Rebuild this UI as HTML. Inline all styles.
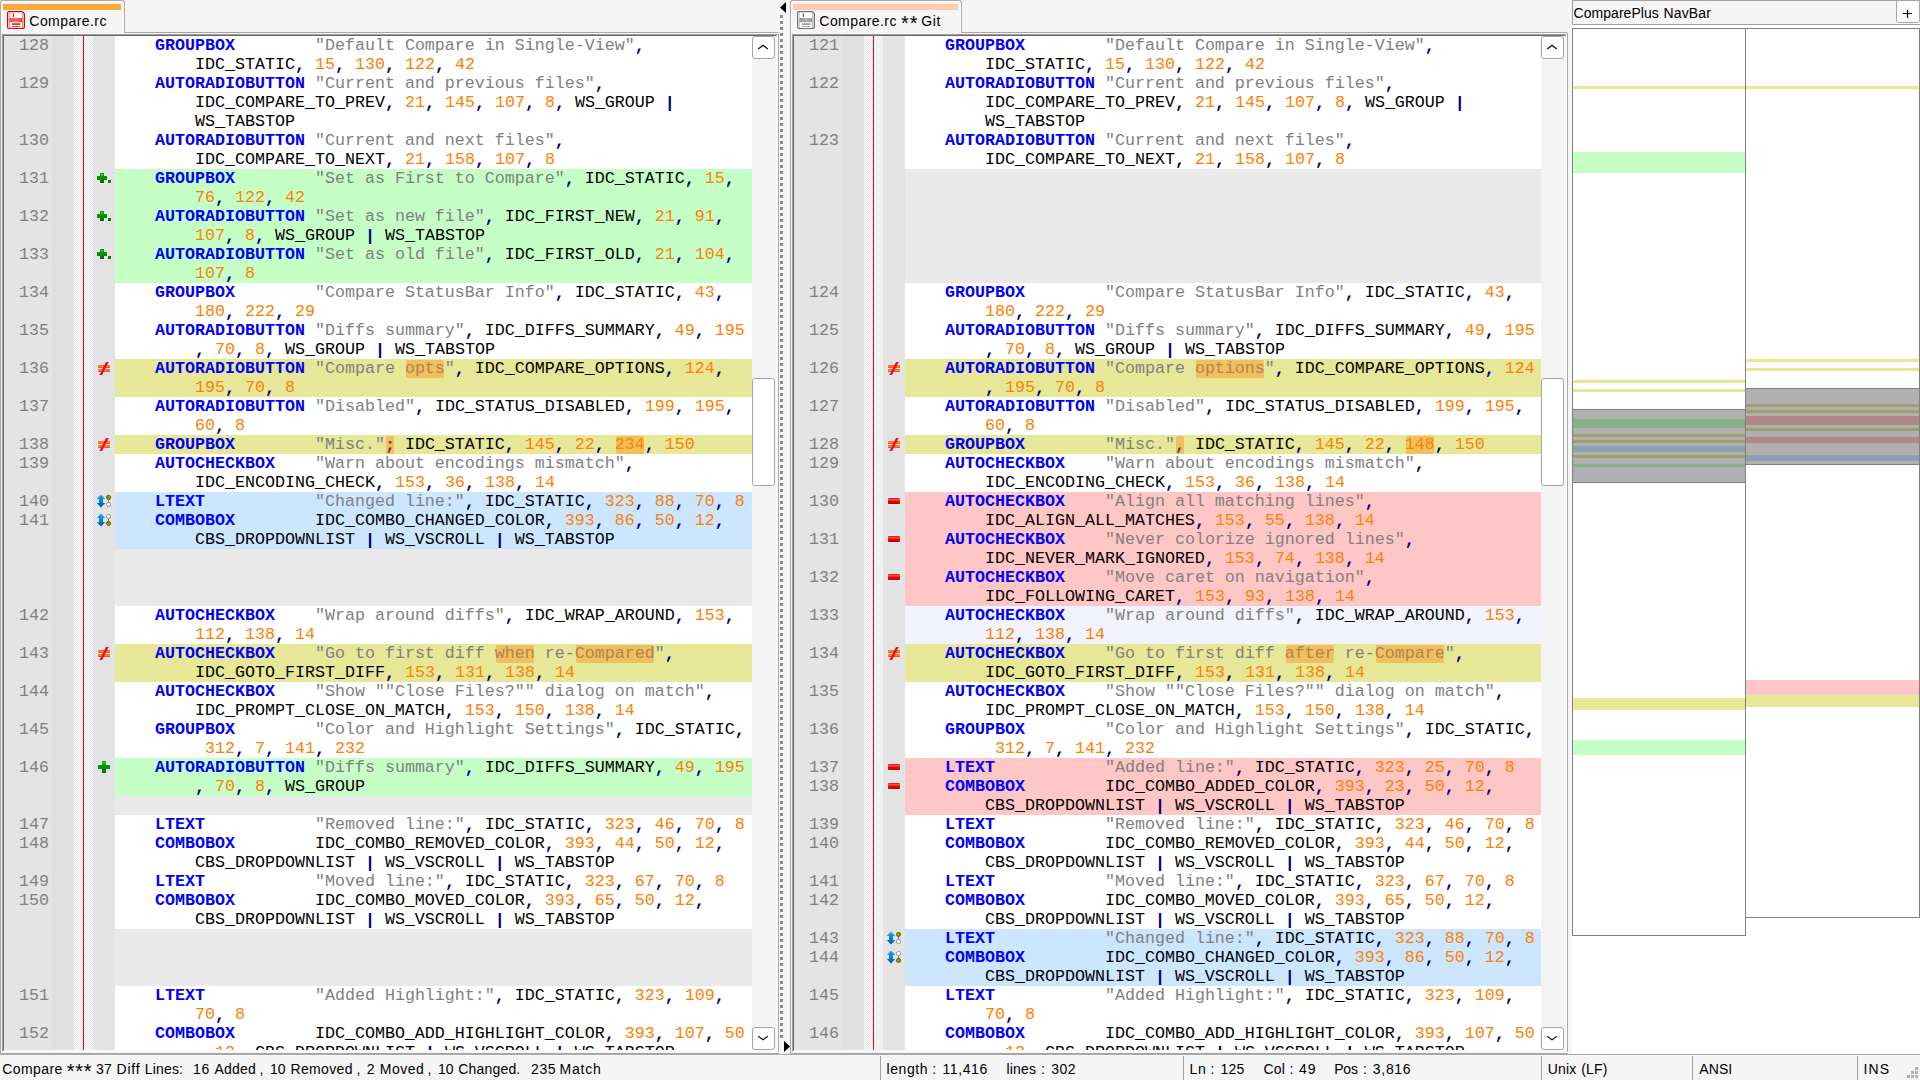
<!DOCTYPE html>
<html lang="en"><head><meta charset="utf-8"><title>Notepad++ ComparePlus</title>
<style>
*{margin:0;padding:0;box-sizing:border-box}
html,body{width:1920px;height:1080px;overflow:hidden;background:#f5f5f5}
body{position:relative;font-family:"Liberation Sans",sans-serif;font-size:14.5px;color:#000}
.abs{position:absolute}
/* tab control frames */
.tc{position:absolute;top:0;height:1054px}
.tc .ln-l{position:absolute;left:0;top:1px;width:1px;height:1052px;background:#a8a8a8}
.tc .ln-r{position:absolute;right:0;top:33px;width:1px;height:1019px;background:#a8a8a8}
.tc .ln-b{position:absolute;left:0;right:0;bottom:0;height:1px;background:#a8a8a8}
.tc .ln-t{position:absolute;left:124px;right:1px;top:32px;height:1px;background:#a8a8a8}
.tab{position:absolute;left:0;top:0;height:33px;border:1px solid #a8a8a8;border-bottom:none;border-radius:3px 3px 0 0;background:#f5f5f5;box-shadow:inset 1px 1px 0 #fff,inset -1px 0 0 #fff}
.tab .bar{position:absolute;left:2px;right:3px;top:3px;height:6px}
.tab .ttl{position:absolute;left:29px;top:9px;line-height:20px;white-space:pre}
.tab svg{position:absolute;left:6px;top:10px}
/* editor */
.ed{position:absolute;top:34px;height:1018px;border-top:1px solid #a0a0a0;border-left:1px solid #a0a0a0;border-right:1px solid #fff;border-bottom:1px solid #fff;background:#fff}
.ed .in{position:absolute;left:0;top:0;right:0;bottom:0;border-top:1px solid #696969;border-left:1px solid #696969;border-right:1px solid #f6f6f6;border-bottom:1px solid #f6f6f6;overflow:hidden}
.ed .vp{position:absolute;left:0;top:0;width:748px;height:1014px;overflow:hidden;background:#fff}
.m1{position:absolute;left:0;top:0;width:48px;height:100%;background:#e4e4e4}
.m2{position:absolute;left:48px;top:0;width:22px;height:100%;background:#e0e0e0}
.m3{position:absolute;left:70px;top:0;width:19px;height:100%;background:#e6e6e6 repeating-conic-gradient(#fbfbfb 0 25%,#e6e6e6 0 50%) 0 0/2px 2px}
.m3 i{position:absolute;left:9px;top:0;width:1.4px;height:100%;background:#ff0000}
.m4{position:absolute;left:89px;top:0;width:22px;height:100%;background:#e3e3e3}
.row{position:absolute;left:111px;width:637px;height:19px;font-family:"Liberation Mono",monospace;font-size:16.675px;line-height:19px;white-space:pre}
.row .t{position:absolute;left:0;top:0;height:19px;white-space:pre;color:#000}
.row .ln{position:absolute;left:-111px;top:0;width:45px;text-align:right;color:#808080}
.row .mk{position:absolute;left:-22px;top:0}
.row u{position:absolute;top:1.3px;height:17.5px;margin-left:.55px;background:rgba(255,131,6,.39);border-radius:1.5px;text-decoration:none}
.row b.k{color:#0000ff;font-weight:bold}
.row b.o{color:#000080;font-weight:bold;position:relative;top:.8px}
.row i{font-style:normal}
.row i.s{color:#808080}
.row i.n{color:#ff8000}
.row.g{background:#c6ffc6}
.row.r{background:#ffc6c6}
.row.y{background:#e7e798}
.row.b{background:#cce6ff}
.row.x{background:#e9e9e9}
.row.c{background:#f3f3fd}
/* scrollbars */
.sb{position:absolute;right:0;top:0;width:24px;height:1014px;background:#f3f3f3}
.sb .btn{position:absolute;left:0;width:23px;height:23px;border:1px solid #a6a6a6;border-radius:3px;background:#fff}
.sb .th{position:absolute;left:0;top:342px;width:23px;height:108px;border:1px solid #a6a6a6;border-radius:3px;background:#fff}
.sb svg{position:absolute;left:0;top:0}
/* status bar */
.st{position:absolute;left:0;top:1054px;width:1920px;height:26px;background:linear-gradient(#a6a6a6,#a6a6a6) 0 0/100% 1px no-repeat,linear-gradient(#fafafa,#fafafa) 0 1px/100% 1px no-repeat,#f5f5f5}
.st .s{position:absolute;top:2px;width:1px;height:24px;background:#a0a0a0}
/* navbar */
.cap{position:absolute;left:1572px;top:0;width:348px;height:25px;border:1px solid #a0a0a0;border-right:none;background:#f5f5f5}
.cap span{position:absolute;left:1px;top:2px;line-height:20px;white-space:pre}
.cap .plus{position:absolute;right:0;top:-1px;width:24px;height:23px;border:1px solid #a6a6a6;border-radius:3px;background:#fff}
.nav{position:absolute;left:1572px;top:25px;width:348px;height:1029px;background:#fff}
.ncol{position:absolute;top:3px;border:1px solid #808080;background:#fff}
.nb{position:absolute;width:173px}
.nb.y{background:#e7e798}.nb.g{background:#c6ffc6}.nb.r{background:#ffc6c6}.nb.b{background:#cce6ff}
.nvp{position:absolute;border:1px solid #808080;background:rgba(0,0,0,.31)}
.uw{position:absolute;font-size:14px;line-height:16px;white-space:pre;color:#000}

</style></head><body>
<svg width="0" height="0" style="position:absolute"><defs>
<linearGradient id="gg" x1="0" y1="0" x2="0" y2="1"><stop offset="0" stop-color="#0aa80a"/><stop offset=".5" stop-color="#009400"/><stop offset="1" stop-color="#006c00"/></linearGradient>
<linearGradient id="gr" x1="0" y1="0" x2="0" y2="1"><stop offset="0" stop-color="#f40000"/><stop offset=".3" stop-color="#ff5a5a"/><stop offset=".55" stop-color="#e00000"/><stop offset=".8" stop-color="#f00000"/><stop offset="1" stop-color="#900000"/></linearGradient>
<linearGradient id="go" x1="0" y1="0" x2="0" y2="1"><stop offset="0" stop-color="#e86000"/><stop offset=".5" stop-color="#ff8a30"/><stop offset="1" stop-color="#c85000"/></linearGradient>
<linearGradient id="gb" x1="0" y1="0" x2="0" y2="1"><stop offset="0" stop-color="#18a4ff"/><stop offset=".5" stop-color="#0088e0"/><stop offset="1" stop-color="#0058a0"/></linearGradient>
<linearGradient id="sr" x1="0" y1="0" x2="1" y2="0"><stop offset="0" stop-color="#ff4040"/><stop offset=".5" stop-color="#ff6868"/><stop offset="1" stop-color="#f03030"/></linearGradient>
<linearGradient id="sg" x1="0" y1="0" x2="1" y2="0"><stop offset="0" stop-color="#909090"/><stop offset=".5" stop-color="#b0b0b0"/><stop offset="1" stop-color="#8a8a8a"/></linearGradient>
</defs></svg>

<!-- left pane -->
<div class="tc" style="left:0;width:779px">
 <div class="ln-l"></div><div class="ln-r"></div><div class="ln-b"></div><div class="ln-t"></div>
 <div class="tab" style="width:125px"><div class="bar" style="background:#faaa3c"></div>
  <svg width="18" height="18" viewBox="0 0 18 18"><path d="M.5 1.5 Q.5 .5 1.5 .5 H15.5 L17.5 2.5 V16.5 Q17.5 17.5 16.5 17.5 H1.5 Q.5 17.5 .5 16.5 Z" fill="url(#sr)" stroke="#e00000" stroke-width="1"/>
 <rect x="1.1" y="1.6" width="1.2" height="15" fill="#ffd8d8"/><rect x="15.6" y="2.6" width="1.2" height="14" fill="#ffd8d8"/>
 <rect x="2.6" y="1.4" width="12.6" height="5.6" fill="#fff"/>
 <rect x="5.8" y="2.2" width="1.2" height="3.8" fill="#e02020"/>
 <rect x="2.8" y="11.2" width="12.2" height="5.8" fill="#fff"/>
 <rect x="4.8" y="12.2" width="8.6" height="1.8" fill="#e03030"/>
 <rect x="4.8" y="15" width="8.6" height="1" fill="#e84040"/></svg>
  </div>
 <div class="ed" style="left:2px;width:776px"><div class="in">
  <div class="vp">
   <div class="m1"></div><div class="m2"></div><div class="m3"><i></i></div><div class="m4"></div>
<div class="row w" style="top:0px"><span class="ln">128</span><div class="t">    <b class="k">GROUPBOX</b>        <i class="s">"Default Compare in Single-View"</i><b class="o">,</b></div></div>
<div class="row w" style="top:19px"><div class="t">        IDC_STATIC<b class="o">,</b> <i class="n">15</i><b class="o">,</b> <i class="n">130</i><b class="o">,</b> <i class="n">122</i><b class="o">,</b> <i class="n">42</i></div></div>
<div class="row w" style="top:38px"><span class="ln">129</span><div class="t">    <b class="k">AUTORADIOBUTTON</b> <i class="s">"Current and previous files"</i><b class="o">,</b></div></div>
<div class="row w" style="top:57px"><div class="t">        IDC_COMPARE_TO_PREV<b class="o">,</b> <i class="n">21</i><b class="o">,</b> <i class="n">145</i><b class="o">,</b> <i class="n">107</i><b class="o">,</b> <i class="n">8</i><b class="o">,</b> WS_GROUP <b class="o">|</b></div></div>
<div class="row w" style="top:76px"><div class="t">        WS_TABSTOP</div></div>
<div class="row w" style="top:95px"><span class="ln">130</span><div class="t">    <b class="k">AUTORADIOBUTTON</b> <i class="s">"Current and next files"</i><b class="o">,</b></div></div>
<div class="row w" style="top:114px"><div class="t">        IDC_COMPARE_TO_NEXT<b class="o">,</b> <i class="n">21</i><b class="o">,</b> <i class="n">158</i><b class="o">,</b> <i class="n">107</i><b class="o">,</b> <i class="n">8</i></div></div>
<div class="row g" style="top:133px"><span class="ln">131</span><svg class="mk" width="22" height="19" viewBox="0 0 22 19"><path d="M6.5 3.5h5v3h3.5v5h-3.5v3.5h-5v-3.5h-3v-5h3z" fill="#f4e8f4" opacity=".8"/>
 <rect x="14.5" y="10.5" width="4" height="4" fill="#f4e8f4" opacity=".8"/>
 <path d="M7 4h4v3h3v4h-3v3h-4v-3h-3v-4h3z" fill="url(#gg)"/>
 <rect x="8" y="5" width="2" height="2" fill="#5cc05c" opacity=".7"/>
 <rect x="15" y="11" width="3" height="3" fill="#008800"/></svg><div class="t">    <b class="k">GROUPBOX</b>        <i class="s">"Set as First to Compare"</i><b class="o">,</b> IDC_STATIC<b class="o">,</b> <i class="n">15</i><b class="o">,</b></div></div>
<div class="row g" style="top:152px"><div class="t">        <i class="n">76</i><b class="o">,</b> <i class="n">122</i><b class="o">,</b> <i class="n">42</i></div></div>
<div class="row g" style="top:171px"><span class="ln">132</span><svg class="mk" width="22" height="19" viewBox="0 0 22 19"><path d="M6.5 3.5h5v3h3.5v5h-3.5v3.5h-5v-3.5h-3v-5h3z" fill="#f4e8f4" opacity=".8"/>
 <rect x="14.5" y="10.5" width="4" height="4" fill="#f4e8f4" opacity=".8"/>
 <path d="M7 4h4v3h3v4h-3v3h-4v-3h-3v-4h3z" fill="url(#gg)"/>
 <rect x="8" y="5" width="2" height="2" fill="#5cc05c" opacity=".7"/>
 <rect x="15" y="11" width="3" height="3" fill="#008800"/></svg><div class="t">    <b class="k">AUTORADIOBUTTON</b> <i class="s">"Set as new file"</i><b class="o">,</b> IDC_FIRST_NEW<b class="o">,</b> <i class="n">21</i><b class="o">,</b> <i class="n">91</i><b class="o">,</b></div></div>
<div class="row g" style="top:190px"><div class="t">        <i class="n">107</i><b class="o">,</b> <i class="n">8</i><b class="o">,</b> WS_GROUP <b class="o">|</b> WS_TABSTOP</div></div>
<div class="row g" style="top:209px"><span class="ln">133</span><svg class="mk" width="22" height="19" viewBox="0 0 22 19"><path d="M6.5 3.5h5v3h3.5v5h-3.5v3.5h-5v-3.5h-3v-5h3z" fill="#f4e8f4" opacity=".8"/>
 <rect x="14.5" y="10.5" width="4" height="4" fill="#f4e8f4" opacity=".8"/>
 <path d="M7 4h4v3h3v4h-3v3h-4v-3h-3v-4h3z" fill="url(#gg)"/>
 <rect x="8" y="5" width="2" height="2" fill="#5cc05c" opacity=".7"/>
 <rect x="15" y="11" width="3" height="3" fill="#008800"/></svg><div class="t">    <b class="k">AUTORADIOBUTTON</b> <i class="s">"Set as old file"</i><b class="o">,</b> IDC_FIRST_OLD<b class="o">,</b> <i class="n">21</i><b class="o">,</b> <i class="n">104</i><b class="o">,</b></div></div>
<div class="row g" style="top:228px"><div class="t">        <i class="n">107</i><b class="o">,</b> <i class="n">8</i></div></div>
<div class="row w" style="top:247px"><span class="ln">134</span><div class="t">    <b class="k">GROUPBOX</b>        <i class="s">"Compare StatusBar Info"</i><b class="o">,</b> IDC_STATIC<b class="o">,</b> <i class="n">43</i><b class="o">,</b></div></div>
<div class="row w" style="top:266px"><div class="t">        <i class="n">180</i><b class="o">,</b> <i class="n">222</i><b class="o">,</b> <i class="n">29</i></div></div>
<div class="row w" style="top:285px"><span class="ln">135</span><div class="t">    <b class="k">AUTORADIOBUTTON</b> <i class="s">"Diffs summary"</i><b class="o">,</b> IDC_DIFFS_SUMMARY<b class="o">,</b> <i class="n">49</i><b class="o">,</b> <i class="n">195</i></div></div>
<div class="row w" style="top:304px"><div class="t">        <b class="o">,</b> <i class="n">70</i><b class="o">,</b> <i class="n">8</i><b class="o">,</b> WS_GROUP <b class="o">|</b> WS_TABSTOP</div></div>
<div class="row y" style="top:323px"><span class="ln">136</span><svg class="mk" width="22" height="19" viewBox="0 0 22 19"><rect x="4.5" y="5.5" width="13" height="8" rx="1" fill="#e8f0f4" opacity=".7"/>
 <rect x="5" y="6" width="12" height="3" rx=".6" fill="url(#go)"/>
 <rect x="5" y="10" width="12" height="3" rx=".6" fill="url(#go)"/>
 <path d="M6.4 16 L9.1 16 L15.7 3 L13 3 Z" fill="#ff0030"/></svg><div class="t">    <b class="k">AUTORADIOBUTTON</b> <i class="s">"Compare opts"</i><b class="o">,</b> IDC_COMPARE_OPTIONS<b class="o">,</b> <i class="n">124</i><b class="o">,</b></div><u style="left:290px;width:38.9px"></u></div>
<div class="row y" style="top:342px"><div class="t">        <i class="n">195</i><b class="o">,</b> <i class="n">70</i><b class="o">,</b> <i class="n">8</i></div></div>
<div class="row w" style="top:361px"><span class="ln">137</span><div class="t">    <b class="k">AUTORADIOBUTTON</b> <i class="s">"Disabled"</i><b class="o">,</b> IDC_STATUS_DISABLED<b class="o">,</b> <i class="n">199</i><b class="o">,</b> <i class="n">195</i><b class="o">,</b></div></div>
<div class="row w" style="top:380px"><div class="t">        <i class="n">60</i><b class="o">,</b> <i class="n">8</i></div></div>
<div class="row y" style="top:399px"><span class="ln">138</span><svg class="mk" width="22" height="19" viewBox="0 0 22 19"><rect x="4.5" y="5.5" width="13" height="8" rx="1" fill="#e8f0f4" opacity=".7"/>
 <rect x="5" y="6" width="12" height="3" rx=".6" fill="url(#go)"/>
 <rect x="5" y="10" width="12" height="3" rx=".6" fill="url(#go)"/>
 <path d="M6.4 16 L9.1 16 L15.7 3 L13 3 Z" fill="#ff0030"/></svg><div class="t">    <b class="k">GROUPBOX</b>        <i class="s">"Misc."</i><b class="o">;</b> IDC_STATIC<b class="o">,</b> <i class="n">145</i><b class="o">,</b> <i class="n">22</i><b class="o">,</b> <i class="n">234</i><b class="o">,</b> <i class="n">150</i></div><u style="left:270px;width:8.9px"></u><u style="left:500px;width:28.9px"></u></div>
<div class="row w" style="top:418px"><span class="ln">139</span><div class="t">    <b class="k">AUTOCHECKBOX</b>    <i class="s">"Warn about encodings mismatch"</i><b class="o">,</b></div></div>
<div class="row w" style="top:437px"><div class="t">        IDC_ENCODING_CHECK<b class="o">,</b> <i class="n">153</i><b class="o">,</b> <i class="n">36</i><b class="o">,</b> <i class="n">138</i><b class="o">,</b> <i class="n">14</i></div></div>
<div class="row b" style="top:456px"><span class="ln">140</span><svg class="mk" width="22" height="19" viewBox="0 0 22 19"><path d="M8 2.6 L12.2 7 L10 7 L10 11 L12.2 11 L8 15.4 L3.8 11 L6 11 L6 7 L3.8 7 Z" fill="url(#gb)"/>
 <path d="M15.5 7v4" stroke="#808080" stroke-width="1"/>
 <circle cx="15.5" cy="5.4" r="2.1" fill="#9a9a00" stroke="#5c5c08" stroke-width=".9"/>
 <circle cx="15.5" cy="12.5" r="2.1" fill="#fff" stroke="#909090" stroke-width="1"/></svg><div class="t">    <b class="k">LTEXT</b>           <i class="s">"Changed line:"</i><b class="o">,</b> IDC_STATIC<b class="o">,</b> <i class="n">323</i><b class="o">,</b> <i class="n">88</i><b class="o">,</b> <i class="n">70</i><b class="o">,</b> <i class="n">8</i></div></div>
<div class="row b" style="top:475px"><span class="ln">141</span><svg class="mk" width="22" height="19" viewBox="0 0 22 19"><path d="M8 2.6 L12.2 7 L10 7 L10 11 L12.2 11 L8 15.4 L3.8 11 L6 11 L6 7 L3.8 7 Z" fill="url(#gb)"/>
 <path d="M15.5 7v4" stroke="#808080" stroke-width="1"/>
 <circle cx="15.5" cy="5.5" r="2.1" fill="#fff" stroke="#909090" stroke-width="1"/>
 <circle cx="15.5" cy="12.4" r="2.1" fill="#9a9a00" stroke="#5c5c08" stroke-width=".9"/></svg><div class="t">    <b class="k">COMBOBOX</b>        IDC_COMBO_CHANGED_COLOR<b class="o">,</b> <i class="n">393</i><b class="o">,</b> <i class="n">86</i><b class="o">,</b> <i class="n">50</i><b class="o">,</b> <i class="n">12</i><b class="o">,</b></div></div>
<div class="row b" style="top:494px"><div class="t">        CBS_DROPDOWNLIST <b class="o">|</b> WS_VSCROLL <b class="o">|</b> WS_TABSTOP</div></div>
<div class="row x" style="top:513px"><div class="t"></div></div>
<div class="row x" style="top:532px"><div class="t"></div></div>
<div class="row x" style="top:551px"><div class="t"></div></div>
<div class="row w" style="top:570px"><span class="ln">142</span><div class="t">    <b class="k">AUTOCHECKBOX</b>    <i class="s">"Wrap around diffs"</i><b class="o">,</b> IDC_WRAP_AROUND<b class="o">,</b> <i class="n">153</i><b class="o">,</b></div></div>
<div class="row w" style="top:589px"><div class="t">        <i class="n">112</i><b class="o">,</b> <i class="n">138</i><b class="o">,</b> <i class="n">14</i></div></div>
<div class="row y" style="top:608px"><span class="ln">143</span><svg class="mk" width="22" height="19" viewBox="0 0 22 19"><rect x="4.5" y="5.5" width="13" height="8" rx="1" fill="#e8f0f4" opacity=".7"/>
 <rect x="5" y="6" width="12" height="3" rx=".6" fill="url(#go)"/>
 <rect x="5" y="10" width="12" height="3" rx=".6" fill="url(#go)"/>
 <path d="M6.4 16 L9.1 16 L15.7 3 L13 3 Z" fill="#ff0030"/></svg><div class="t">    <b class="k">AUTOCHECKBOX</b>    <i class="s">"Go to first diff when re-Compared"</i><b class="o">,</b></div><u style="left:380px;width:38.9px"></u><u style="left:460px;width:78.9px"></u></div>
<div class="row y" style="top:627px"><div class="t">        IDC_GOTO_FIRST_DIFF<b class="o">,</b> <i class="n">153</i><b class="o">,</b> <i class="n">131</i><b class="o">,</b> <i class="n">138</i><b class="o">,</b> <i class="n">14</i></div></div>
<div class="row w" style="top:646px"><span class="ln">144</span><div class="t">    <b class="k">AUTOCHECKBOX</b>    <i class="s">"Show ""Close Files?"" dialog on match"</i><b class="o">,</b></div></div>
<div class="row w" style="top:665px"><div class="t">        IDC_PROMPT_CLOSE_ON_MATCH<b class="o">,</b> <i class="n">153</i><b class="o">,</b> <i class="n">150</i><b class="o">,</b> <i class="n">138</i><b class="o">,</b> <i class="n">14</i></div></div>
<div class="row w" style="top:684px"><span class="ln">145</span><div class="t">    <b class="k">GROUPBOX</b>        <i class="s">"Color and Highlight Settings"</i><b class="o">,</b> IDC_STATIC<b class="o">,</b></div></div>
<div class="row w" style="top:703px"><div class="t">         <i class="n">312</i><b class="o">,</b> <i class="n">7</i><b class="o">,</b> <i class="n">141</i><b class="o">,</b> <i class="n">232</i></div></div>
<div class="row g" style="top:722px"><span class="ln">146</span><svg class="mk" width="22" height="19" viewBox="0 0 22 19"><path d="M8.5 2.5h5v4h4v5h-4v4h-5v-4h-4v-5h4z" fill="#f4e8f4" opacity=".8"/>
 <path d="M9 3h4v4h4v4h-4v4h-4v-4h-4v-4h4z" fill="url(#gg)"/>
 <rect x="10" y="4" width="2" height="2.5" fill="#5cc05c" opacity=".7"/></svg><div class="t">    <b class="k">AUTORADIOBUTTON</b> <i class="s">"Diffs summary"</i><b class="o">,</b> IDC_DIFFS_SUMMARY<b class="o">,</b> <i class="n">49</i><b class="o">,</b> <i class="n">195</i></div></div>
<div class="row g" style="top:741px"><div class="t">        <b class="o">,</b> <i class="n">70</i><b class="o">,</b> <i class="n">8</i><b class="o">,</b> WS_GROUP</div></div>
<div class="row x" style="top:760px"><div class="t"></div></div>
<div class="row w" style="top:779px"><span class="ln">147</span><div class="t">    <b class="k">LTEXT</b>           <i class="s">"Removed line:"</i><b class="o">,</b> IDC_STATIC<b class="o">,</b> <i class="n">323</i><b class="o">,</b> <i class="n">46</i><b class="o">,</b> <i class="n">70</i><b class="o">,</b> <i class="n">8</i></div></div>
<div class="row w" style="top:798px"><span class="ln">148</span><div class="t">    <b class="k">COMBOBOX</b>        IDC_COMBO_REMOVED_COLOR<b class="o">,</b> <i class="n">393</i><b class="o">,</b> <i class="n">44</i><b class="o">,</b> <i class="n">50</i><b class="o">,</b> <i class="n">12</i><b class="o">,</b></div></div>
<div class="row w" style="top:817px"><div class="t">        CBS_DROPDOWNLIST <b class="o">|</b> WS_VSCROLL <b class="o">|</b> WS_TABSTOP</div></div>
<div class="row w" style="top:836px"><span class="ln">149</span><div class="t">    <b class="k">LTEXT</b>           <i class="s">"Moved line:"</i><b class="o">,</b> IDC_STATIC<b class="o">,</b> <i class="n">323</i><b class="o">,</b> <i class="n">67</i><b class="o">,</b> <i class="n">70</i><b class="o">,</b> <i class="n">8</i></div></div>
<div class="row w" style="top:855px"><span class="ln">150</span><div class="t">    <b class="k">COMBOBOX</b>        IDC_COMBO_MOVED_COLOR<b class="o">,</b> <i class="n">393</i><b class="o">,</b> <i class="n">65</i><b class="o">,</b> <i class="n">50</i><b class="o">,</b> <i class="n">12</i><b class="o">,</b></div></div>
<div class="row w" style="top:874px"><div class="t">        CBS_DROPDOWNLIST <b class="o">|</b> WS_VSCROLL <b class="o">|</b> WS_TABSTOP</div></div>
<div class="row x" style="top:893px"><div class="t"></div></div>
<div class="row x" style="top:912px"><div class="t"></div></div>
<div class="row x" style="top:931px"><div class="t"></div></div>
<div class="row w" style="top:950px"><span class="ln">151</span><div class="t">    <b class="k">LTEXT</b>           <i class="s">"Added Highlight:"</i><b class="o">,</b> IDC_STATIC<b class="o">,</b> <i class="n">323</i><b class="o">,</b> <i class="n">109</i><b class="o">,</b></div></div>
<div class="row w" style="top:969px"><div class="t">        <i class="n">70</i><b class="o">,</b> <i class="n">8</i></div></div>
<div class="row w" style="top:988px"><span class="ln">152</span><div class="t">    <b class="k">COMBOBOX</b>        IDC_COMBO_ADD_HIGHLIGHT_COLOR<b class="o">,</b> <i class="n">393</i><b class="o">,</b> <i class="n">107</i><b class="o">,</b> <i class="n">50</i></div></div>
<div class="row w" style="top:1007px"><div class="t">        <b class="o">,</b> <i class="n">12</i><b class="o">,</b> CBS_DROPDOWNLIST <b class="o">|</b> WS_VSCROLL <b class="o">|</b> WS_TABSTOP</div></div>
  </div>
  <div class="sb"><div class="btn" style="top:0"><svg width="21" height="20" viewBox="0 0 21 20"><path d="M5.1 12 L10 8.4 L14.9 12" fill="none" stroke="#1a1a1a" stroke-width="1.3"/></svg></div>
   <div class="th"></div>
   <div class="btn" style="top:991px"><svg width="21" height="20" viewBox="0 0 21 20"><path d="M5.1 8.2 L10 11.8 L14.9 8.2" fill="none" stroke="#1a1a1a" stroke-width="1.3"/></svg></div></div>
 </div></div>
</div>

<!-- splitter -->
<svg class="abs" style="left:779px;top:0" width="12" height="1054" viewBox="0 0 12 1054">
 <defs><pattern id="dots" x="0" y="15" width="12" height="6" patternUnits="userSpaceOnUse"><rect x="2" y="1" width="3" height="3" fill="#fff"/><rect x="1" y="0" width="3" height="3" fill="#8a8a8a"/></pattern></defs>
 <rect x="0" y="15" width="12" height="1024" fill="url(#dots)"/>
 <path d="M1 7.5 L7 2 L7 13 Z" fill="#000"/>
 <path d="M11 1046.5 L5 1041 L5 1052 Z" fill="#000"/>
</svg>

<!-- right pane -->
<div class="tc" style="left:790px;width:778px">
 <div class="ln-l"></div><div class="ln-r"></div><div class="ln-b"></div><div class="ln-t" style="left:171px"></div>
 <div class="tab" style="width:172px"><div class="bar" style="background:#ffcab0"></div>
  <svg width="18" height="18" viewBox="0 0 18 18"><path d="M.5 1.5 Q.5 .5 1.5 .5 H15.5 L17.5 2.5 V16.5 Q17.5 17.5 16.5 17.5 H1.5 Q.5 17.5 .5 16.5 Z" fill="url(#sg)" stroke="#6e6e6e" stroke-width="1"/>
 <rect x="1.1" y="1.6" width="1.2" height="15" fill="#ececec"/><rect x="15.6" y="2.6" width="1.2" height="14" fill="#ececec"/>
 <rect x="2.6" y="1.4" width="12.6" height="5.6" fill="#fff"/>
 <rect x="5.8" y="2.2" width="1.2" height="3.8" fill="#707070"/>
 <rect x="2.8" y="11.2" width="12.2" height="5.8" fill="#fff"/>
 <rect x="4.8" y="12.2" width="8.6" height="1.8" fill="#a0a0a0"/>
 <rect x="4.8" y="15" width="8.6" height="1" fill="#a8a8a8"/></svg>
  </div>
 <div class="ed" style="left:2px;width:775px"><div class="in">
  <div class="vp" style="width:747px">
   <div class="m1"></div><div class="m2"></div><div class="m3"><i></i></div><div class="m4"></div>
<div class="row w" style="top:0px"><span class="ln">121</span><div class="t">    <b class="k">GROUPBOX</b>        <i class="s">"Default Compare in Single-View"</i><b class="o">,</b></div></div>
<div class="row w" style="top:19px"><div class="t">        IDC_STATIC<b class="o">,</b> <i class="n">15</i><b class="o">,</b> <i class="n">130</i><b class="o">,</b> <i class="n">122</i><b class="o">,</b> <i class="n">42</i></div></div>
<div class="row w" style="top:38px"><span class="ln">122</span><div class="t">    <b class="k">AUTORADIOBUTTON</b> <i class="s">"Current and previous files"</i><b class="o">,</b></div></div>
<div class="row w" style="top:57px"><div class="t">        IDC_COMPARE_TO_PREV<b class="o">,</b> <i class="n">21</i><b class="o">,</b> <i class="n">145</i><b class="o">,</b> <i class="n">107</i><b class="o">,</b> <i class="n">8</i><b class="o">,</b> WS_GROUP <b class="o">|</b></div></div>
<div class="row w" style="top:76px"><div class="t">        WS_TABSTOP</div></div>
<div class="row w" style="top:95px"><span class="ln">123</span><div class="t">    <b class="k">AUTORADIOBUTTON</b> <i class="s">"Current and next files"</i><b class="o">,</b></div></div>
<div class="row w" style="top:114px"><div class="t">        IDC_COMPARE_TO_NEXT<b class="o">,</b> <i class="n">21</i><b class="o">,</b> <i class="n">158</i><b class="o">,</b> <i class="n">107</i><b class="o">,</b> <i class="n">8</i></div></div>
<div class="row x" style="top:133px"><div class="t"></div></div>
<div class="row x" style="top:152px"><div class="t"></div></div>
<div class="row x" style="top:171px"><div class="t"></div></div>
<div class="row x" style="top:190px"><div class="t"></div></div>
<div class="row x" style="top:209px"><div class="t"></div></div>
<div class="row x" style="top:228px"><div class="t"></div></div>
<div class="row w" style="top:247px"><span class="ln">124</span><div class="t">    <b class="k">GROUPBOX</b>        <i class="s">"Compare StatusBar Info"</i><b class="o">,</b> IDC_STATIC<b class="o">,</b> <i class="n">43</i><b class="o">,</b></div></div>
<div class="row w" style="top:266px"><div class="t">        <i class="n">180</i><b class="o">,</b> <i class="n">222</i><b class="o">,</b> <i class="n">29</i></div></div>
<div class="row w" style="top:285px"><span class="ln">125</span><div class="t">    <b class="k">AUTORADIOBUTTON</b> <i class="s">"Diffs summary"</i><b class="o">,</b> IDC_DIFFS_SUMMARY<b class="o">,</b> <i class="n">49</i><b class="o">,</b> <i class="n">195</i></div></div>
<div class="row w" style="top:304px"><div class="t">        <b class="o">,</b> <i class="n">70</i><b class="o">,</b> <i class="n">8</i><b class="o">,</b> WS_GROUP <b class="o">|</b> WS_TABSTOP</div></div>
<div class="row y" style="top:323px"><span class="ln">126</span><svg class="mk" width="22" height="19" viewBox="0 0 22 19"><rect x="4.5" y="5.5" width="13" height="8" rx="1" fill="#e8f0f4" opacity=".7"/>
 <rect x="5" y="6" width="12" height="3" rx=".6" fill="url(#go)"/>
 <rect x="5" y="10" width="12" height="3" rx=".6" fill="url(#go)"/>
 <path d="M6.4 16 L9.1 16 L15.7 3 L13 3 Z" fill="#ff0030"/></svg><div class="t">    <b class="k">AUTORADIOBUTTON</b> <i class="s">"Compare options"</i><b class="o">,</b> IDC_COMPARE_OPTIONS<b class="o">,</b> <i class="n">124</i></div><u style="left:290px;width:68.9px"></u></div>
<div class="row y" style="top:342px"><div class="t">        <b class="o">,</b> <i class="n">195</i><b class="o">,</b> <i class="n">70</i><b class="o">,</b> <i class="n">8</i></div></div>
<div class="row w" style="top:361px"><span class="ln">127</span><div class="t">    <b class="k">AUTORADIOBUTTON</b> <i class="s">"Disabled"</i><b class="o">,</b> IDC_STATUS_DISABLED<b class="o">,</b> <i class="n">199</i><b class="o">,</b> <i class="n">195</i><b class="o">,</b></div></div>
<div class="row w" style="top:380px"><div class="t">        <i class="n">60</i><b class="o">,</b> <i class="n">8</i></div></div>
<div class="row y" style="top:399px"><span class="ln">128</span><svg class="mk" width="22" height="19" viewBox="0 0 22 19"><rect x="4.5" y="5.5" width="13" height="8" rx="1" fill="#e8f0f4" opacity=".7"/>
 <rect x="5" y="6" width="12" height="3" rx=".6" fill="url(#go)"/>
 <rect x="5" y="10" width="12" height="3" rx=".6" fill="url(#go)"/>
 <path d="M6.4 16 L9.1 16 L15.7 3 L13 3 Z" fill="#ff0030"/></svg><div class="t">    <b class="k">GROUPBOX</b>        <i class="s">"Misc."</i><b class="o">,</b> IDC_STATIC<b class="o">,</b> <i class="n">145</i><b class="o">,</b> <i class="n">22</i><b class="o">,</b> <i class="n">148</i><b class="o">,</b> <i class="n">150</i></div><u style="left:270px;width:8.9px"></u><u style="left:500px;width:28.9px"></u></div>
<div class="row w" style="top:418px"><span class="ln">129</span><div class="t">    <b class="k">AUTOCHECKBOX</b>    <i class="s">"Warn about encodings mismatch"</i><b class="o">,</b></div></div>
<div class="row w" style="top:437px"><div class="t">        IDC_ENCODING_CHECK<b class="o">,</b> <i class="n">153</i><b class="o">,</b> <i class="n">36</i><b class="o">,</b> <i class="n">138</i><b class="o">,</b> <i class="n">14</i></div></div>
<div class="row r" style="top:456px"><span class="ln">130</span><svg class="mk" width="22" height="19" viewBox="0 0 22 19"><rect x="4.3" y="5.3" width="13.4" height="7.4" rx="1" fill="#e0f0f0" opacity=".8"/>
 <rect x="5" y="6" width="12" height="6" rx=".8" fill="url(#gr)"/></svg><div class="t">    <b class="k">AUTOCHECKBOX</b>    <i class="s">"Align all matching lines"</i><b class="o">,</b></div></div>
<div class="row r" style="top:475px"><div class="t">        IDC_ALIGN_ALL_MATCHES<b class="o">,</b> <i class="n">153</i><b class="o">,</b> <i class="n">55</i><b class="o">,</b> <i class="n">138</i><b class="o">,</b> <i class="n">14</i></div></div>
<div class="row r" style="top:494px"><span class="ln">131</span><svg class="mk" width="22" height="19" viewBox="0 0 22 19"><rect x="4.3" y="5.3" width="13.4" height="7.4" rx="1" fill="#e0f0f0" opacity=".8"/>
 <rect x="5" y="6" width="12" height="6" rx=".8" fill="url(#gr)"/></svg><div class="t">    <b class="k">AUTOCHECKBOX</b>    <i class="s">"Never colorize ignored lines"</i><b class="o">,</b></div></div>
<div class="row r" style="top:513px"><div class="t">        IDC_NEVER_MARK_IGNORED<b class="o">,</b> <i class="n">153</i><b class="o">,</b> <i class="n">74</i><b class="o">,</b> <i class="n">138</i><b class="o">,</b> <i class="n">14</i></div></div>
<div class="row r" style="top:532px"><span class="ln">132</span><svg class="mk" width="22" height="19" viewBox="0 0 22 19"><rect x="4.3" y="5.3" width="13.4" height="7.4" rx="1" fill="#e0f0f0" opacity=".8"/>
 <rect x="5" y="6" width="12" height="6" rx=".8" fill="url(#gr)"/></svg><div class="t">    <b class="k">AUTOCHECKBOX</b>    <i class="s">"Move caret on navigation"</i><b class="o">,</b></div></div>
<div class="row r" style="top:551px"><div class="t">        IDC_FOLLOWING_CARET<b class="o">,</b> <i class="n">153</i><b class="o">,</b> <i class="n">93</i><b class="o">,</b> <i class="n">138</i><b class="o">,</b> <i class="n">14</i></div></div>
<div class="row c" style="top:570px"><span class="ln">133</span><div class="t">    <b class="k">AUTOCHECKBOX</b>    <i class="s">"Wrap around diffs"</i><b class="o">,</b> IDC_WRAP_AROUND<b class="o">,</b> <i class="n">153</i><b class="o">,</b></div></div>
<div class="row c" style="top:589px"><div class="t">        <i class="n">112</i><b class="o">,</b> <i class="n">138</i><b class="o">,</b> <i class="n">14</i></div></div>
<div class="row y" style="top:608px"><span class="ln">134</span><svg class="mk" width="22" height="19" viewBox="0 0 22 19"><rect x="4.5" y="5.5" width="13" height="8" rx="1" fill="#e8f0f4" opacity=".7"/>
 <rect x="5" y="6" width="12" height="3" rx=".6" fill="url(#go)"/>
 <rect x="5" y="10" width="12" height="3" rx=".6" fill="url(#go)"/>
 <path d="M6.4 16 L9.1 16 L15.7 3 L13 3 Z" fill="#ff0030"/></svg><div class="t">    <b class="k">AUTOCHECKBOX</b>    <i class="s">"Go to first diff after re-Compare"</i><b class="o">,</b></div><u style="left:380px;width:48.9px"></u><u style="left:470px;width:68.9px"></u></div>
<div class="row y" style="top:627px"><div class="t">        IDC_GOTO_FIRST_DIFF<b class="o">,</b> <i class="n">153</i><b class="o">,</b> <i class="n">131</i><b class="o">,</b> <i class="n">138</i><b class="o">,</b> <i class="n">14</i></div></div>
<div class="row w" style="top:646px"><span class="ln">135</span><div class="t">    <b class="k">AUTOCHECKBOX</b>    <i class="s">"Show ""Close Files?"" dialog on match"</i><b class="o">,</b></div></div>
<div class="row w" style="top:665px"><div class="t">        IDC_PROMPT_CLOSE_ON_MATCH<b class="o">,</b> <i class="n">153</i><b class="o">,</b> <i class="n">150</i><b class="o">,</b> <i class="n">138</i><b class="o">,</b> <i class="n">14</i></div></div>
<div class="row w" style="top:684px"><span class="ln">136</span><div class="t">    <b class="k">GROUPBOX</b>        <i class="s">"Color and Highlight Settings"</i><b class="o">,</b> IDC_STATIC<b class="o">,</b></div></div>
<div class="row w" style="top:703px"><div class="t">         <i class="n">312</i><b class="o">,</b> <i class="n">7</i><b class="o">,</b> <i class="n">141</i><b class="o">,</b> <i class="n">232</i></div></div>
<div class="row r" style="top:722px"><span class="ln">137</span><svg class="mk" width="22" height="19" viewBox="0 0 22 19"><rect x="4.3" y="5.3" width="13.4" height="7.4" rx="1" fill="#e0f0f0" opacity=".8"/>
 <rect x="5" y="6" width="12" height="6" rx=".8" fill="url(#gr)"/></svg><div class="t">    <b class="k">LTEXT</b>           <i class="s">"Added line:"</i><b class="o">,</b> IDC_STATIC<b class="o">,</b> <i class="n">323</i><b class="o">,</b> <i class="n">25</i><b class="o">,</b> <i class="n">70</i><b class="o">,</b> <i class="n">8</i></div></div>
<div class="row r" style="top:741px"><span class="ln">138</span><svg class="mk" width="22" height="19" viewBox="0 0 22 19"><rect x="4.3" y="5.3" width="13.4" height="7.4" rx="1" fill="#e0f0f0" opacity=".8"/>
 <rect x="5" y="6" width="12" height="6" rx=".8" fill="url(#gr)"/></svg><div class="t">    <b class="k">COMBOBOX</b>        IDC_COMBO_ADDED_COLOR<b class="o">,</b> <i class="n">393</i><b class="o">,</b> <i class="n">23</i><b class="o">,</b> <i class="n">50</i><b class="o">,</b> <i class="n">12</i><b class="o">,</b></div></div>
<div class="row r" style="top:760px"><div class="t">        CBS_DROPDOWNLIST <b class="o">|</b> WS_VSCROLL <b class="o">|</b> WS_TABSTOP</div></div>
<div class="row w" style="top:779px"><span class="ln">139</span><div class="t">    <b class="k">LTEXT</b>           <i class="s">"Removed line:"</i><b class="o">,</b> IDC_STATIC<b class="o">,</b> <i class="n">323</i><b class="o">,</b> <i class="n">46</i><b class="o">,</b> <i class="n">70</i><b class="o">,</b> <i class="n">8</i></div></div>
<div class="row w" style="top:798px"><span class="ln">140</span><div class="t">    <b class="k">COMBOBOX</b>        IDC_COMBO_REMOVED_COLOR<b class="o">,</b> <i class="n">393</i><b class="o">,</b> <i class="n">44</i><b class="o">,</b> <i class="n">50</i><b class="o">,</b> <i class="n">12</i><b class="o">,</b></div></div>
<div class="row w" style="top:817px"><div class="t">        CBS_DROPDOWNLIST <b class="o">|</b> WS_VSCROLL <b class="o">|</b> WS_TABSTOP</div></div>
<div class="row w" style="top:836px"><span class="ln">141</span><div class="t">    <b class="k">LTEXT</b>           <i class="s">"Moved line:"</i><b class="o">,</b> IDC_STATIC<b class="o">,</b> <i class="n">323</i><b class="o">,</b> <i class="n">67</i><b class="o">,</b> <i class="n">70</i><b class="o">,</b> <i class="n">8</i></div></div>
<div class="row w" style="top:855px"><span class="ln">142</span><div class="t">    <b class="k">COMBOBOX</b>        IDC_COMBO_MOVED_COLOR<b class="o">,</b> <i class="n">393</i><b class="o">,</b> <i class="n">65</i><b class="o">,</b> <i class="n">50</i><b class="o">,</b> <i class="n">12</i><b class="o">,</b></div></div>
<div class="row w" style="top:874px"><div class="t">        CBS_DROPDOWNLIST <b class="o">|</b> WS_VSCROLL <b class="o">|</b> WS_TABSTOP</div></div>
<div class="row b" style="top:893px"><span class="ln">143</span><svg class="mk" width="22" height="19" viewBox="0 0 22 19"><path d="M8 2.6 L12.2 7 L10 7 L10 11 L12.2 11 L8 15.4 L3.8 11 L6 11 L6 7 L3.8 7 Z" fill="url(#gb)"/>
 <path d="M15.5 7v4" stroke="#808080" stroke-width="1"/>
 <circle cx="15.5" cy="5.4" r="2.1" fill="#9a9a00" stroke="#5c5c08" stroke-width=".9"/>
 <circle cx="15.5" cy="12.5" r="2.1" fill="#fff" stroke="#909090" stroke-width="1"/></svg><div class="t">    <b class="k">LTEXT</b>           <i class="s">"Changed line:"</i><b class="o">,</b> IDC_STATIC<b class="o">,</b> <i class="n">323</i><b class="o">,</b> <i class="n">88</i><b class="o">,</b> <i class="n">70</i><b class="o">,</b> <i class="n">8</i></div></div>
<div class="row b" style="top:912px"><span class="ln">144</span><svg class="mk" width="22" height="19" viewBox="0 0 22 19"><path d="M8 2.6 L12.2 7 L10 7 L10 11 L12.2 11 L8 15.4 L3.8 11 L6 11 L6 7 L3.8 7 Z" fill="url(#gb)"/>
 <path d="M15.5 7v4" stroke="#808080" stroke-width="1"/>
 <circle cx="15.5" cy="5.5" r="2.1" fill="#fff" stroke="#909090" stroke-width="1"/>
 <circle cx="15.5" cy="12.4" r="2.1" fill="#9a9a00" stroke="#5c5c08" stroke-width=".9"/></svg><div class="t">    <b class="k">COMBOBOX</b>        IDC_COMBO_CHANGED_COLOR<b class="o">,</b> <i class="n">393</i><b class="o">,</b> <i class="n">86</i><b class="o">,</b> <i class="n">50</i><b class="o">,</b> <i class="n">12</i><b class="o">,</b></div></div>
<div class="row b" style="top:931px"><div class="t">        CBS_DROPDOWNLIST <b class="o">|</b> WS_VSCROLL <b class="o">|</b> WS_TABSTOP</div></div>
<div class="row w" style="top:950px"><span class="ln">145</span><div class="t">    <b class="k">LTEXT</b>           <i class="s">"Added Highlight:"</i><b class="o">,</b> IDC_STATIC<b class="o">,</b> <i class="n">323</i><b class="o">,</b> <i class="n">109</i><b class="o">,</b></div></div>
<div class="row w" style="top:969px"><div class="t">        <i class="n">70</i><b class="o">,</b> <i class="n">8</i></div></div>
<div class="row w" style="top:988px"><span class="ln">146</span><div class="t">    <b class="k">COMBOBOX</b>        IDC_COMBO_ADD_HIGHLIGHT_COLOR<b class="o">,</b> <i class="n">393</i><b class="o">,</b> <i class="n">107</i><b class="o">,</b> <i class="n">50</i></div></div>
<div class="row w" style="top:1007px"><div class="t">        <b class="o">,</b> <i class="n">12</i><b class="o">,</b> CBS_DROPDOWNLIST <b class="o">|</b> WS_VSCROLL <b class="o">|</b> WS_TABSTOP</div></div>
  </div>
  <div class="sb"><div class="btn" style="top:0"><svg width="21" height="20" viewBox="0 0 21 20"><path d="M5.1 12 L10 8.4 L14.9 12" fill="none" stroke="#1a1a1a" stroke-width="1.3"/></svg></div>
   <div class="th"></div>
   <div class="btn" style="top:991px"><svg width="21" height="20" viewBox="0 0 21 20"><path d="M5.1 8.2 L10 11.8 L14.9 8.2" fill="none" stroke="#1a1a1a" stroke-width="1.3"/></svg></div></div>
 </div></div>
</div>

<!-- navbar -->
<div class="cap"><div class="plus"><svg width="22" height="21" viewBox="0 0 22 21"><path d="M6 12.5 H15 M10.5 8.8 V17" stroke="#000" stroke-width="1.2" fill="none"/></svg></div></div>
<div class="nav">
 <div class="abs" style="left:1px;top:4px;width:347px;height:906px">
<div class="nb y" style="left:0px;top:57px;height:3px"></div>
<div class="nb g" style="left:0px;top:123px;height:21px"></div>
<div class="nb y" style="left:0px;top:351px;height:3px"></div>
<div class="nb y" style="left:0px;top:360px;height:3px"></div>
<div class="nb g" style="left:0px;top:390px;height:9px"></div>
<div class="nb y" style="left:0px;top:405px;height:3px"></div>
<div class="nb y" style="left:0px;top:411px;height:3px"></div>
<div class="nb b" style="left:0px;top:417px;height:6px"></div>
<div class="nb y" style="left:0px;top:426px;height:3px"></div>
<div class="nb g" style="left:0px;top:435px;height:3px"></div>
<div class="nb y" style="left:0px;top:669px;height:12px"></div>
<div class="nb g" style="left:0px;top:711px;height:15px"></div>
<div class="nb y" style="left:173px;top:57px;height:3px"></div>
<div class="nb y" style="left:173px;top:330px;height:3px"></div>
<div class="nb y" style="left:173px;top:339px;height:3px"></div>
<div class="nb y" style="left:173px;top:375px;height:3px"></div>
<div class="nb y" style="left:173px;top:381px;height:3px"></div>
<div class="nb r" style="left:173px;top:387px;height:9px"></div>
<div class="nb y" style="left:173px;top:399px;height:3px"></div>
<div class="nb r" style="left:173px;top:408px;height:6px"></div>
<div class="nb b" style="left:173px;top:426px;height:6px"></div>
<div class="nb r" style="left:173px;top:651px;height:15px"></div>
<div class="nb y" style="left:173px;top:666px;height:12px"></div>
 </div>
 <div class="abs" style="left:0;top:3px;width:348px;height:1px;background:#808080"></div>
 <div class="abs" style="left:0;top:3px;width:1px;height:908px;background:#808080"></div>
 <div class="abs" style="left:173px;top:3px;width:1px;height:908px;background:#808080"></div>
 <div class="abs" style="left:0;top:910px;width:174px;height:1px;background:#808080"></div>
 <div class="abs" style="left:347px;top:3px;width:1px;height:890px;background:#808080"></div>
 <div class="abs" style="left:173px;top:892px;width:175px;height:1px;background:#808080"></div>
 <div class="nvp" style="left:0;top:384px;width:174px;height:74px"></div>
 <div class="nvp" style="left:173px;top:363px;width:175px;height:77px"></div>
</div>

<!-- status bar -->
<div class="st">
 <div class="s" style="left:880px"></div>
 <div class="s" style="left:1183px"></div>
 <div class="s" style="left:1541px"></div>
 <div class="s" style="left:1692px"></div>
 <div class="s" style="left:1857px"></div>
 <svg class="abs" style="left:1907px;top:13px" width="12" height="12" viewBox="0 0 12 12"><g fill="#b0b0b0"><rect x="8" y="0" width="3" height="3"/><rect x="4" y="4" width="3" height="3"/><rect x="8" y="4" width="3" height="3"/><rect x="0" y="8" width="3" height="3"/><rect x="4" y="8" width="3" height="3"/><rect x="8" y="8" width="3" height="3"/></g></svg>
</div>
<span class="uw" style="left:2.34px;top:1060.65px;letter-spacing:0.39px">Compare</span><span class="uw" style="left:66.70px;top:1059.90px;font-size:20px;line-height:22px">*</span><span class="uw" style="left:75.25px;top:1059.90px;font-size:20px;line-height:22px">*</span><span class="uw" style="left:83.80px;top:1059.90px;font-size:20px;line-height:22px">*</span><span class="uw" style="left:96.06px;top:1060.65px;letter-spacing:0.23px">37</span><span class="uw" style="left:116.61px;top:1060.65px;letter-spacing:0.77px">Diff</span><span class="uw" style="left:144.71px;top:1060.65px;letter-spacing:0.18px">Lines:</span><span class="uw" style="left:193.12px;top:1060.65px;letter-spacing:0.57px">16</span><span class="uw" style="left:214.50px;top:1060.65px;letter-spacing:0.20px">Added</span><span class="uw" style="left:259.41px;top:1060.65px;letter-spacing:0.00px">,</span><span class="uw" style="left:270.12px;top:1060.65px;letter-spacing:-0.05px">10</span><span class="uw" style="left:290.41px;top:1060.65px;letter-spacing:0.36px">Removed</span><span class="uw" style="left:356.61px;top:1060.65px;letter-spacing:0.00px">,</span><span class="uw" style="left:366.84px;top:1060.65px;letter-spacing:0.00px">2</span><span class="uw" style="left:379.71px;top:1060.65px;letter-spacing:0.51px">Moved</span><span class="uw" style="left:427.41px;top:1060.65px;letter-spacing:0.00px">,</span><span class="uw" style="left:438.12px;top:1060.65px;letter-spacing:-0.05px">10</span><span class="uw" style="left:458.34px;top:1060.65px;letter-spacing:0.17px">Changed.</span><span class="uw" style="left:531.04px;top:1060.65px;letter-spacing:0.58px">235</span><span class="uw" style="left:559.41px;top:1060.65px;letter-spacing:0.81px">Match</span><span class="uw" style="left:886.62px;top:1060.65px;letter-spacing:0.54px">length</span><span class="uw" style="left:932.21px;top:1060.65px;letter-spacing:0.00px">:</span><span class="uw" style="left:942.42px;top:1060.65px;letter-spacing:0.61px">11,416</span><span class="uw" style="left:1006.62px;top:1060.65px;letter-spacing:0.13px">lines</span><span class="uw" style="left:1040.91px;top:1060.65px;letter-spacing:0.00px">:</span><span class="uw" style="left:1051.26px;top:1060.65px;letter-spacing:0.47px">302</span><span class="uw" style="left:1189.41px;top:1060.65px;letter-spacing:0.81px">Ln</span><span class="uw" style="left:1210.61px;top:1060.65px;letter-spacing:0.00px">:</span><span class="uw" style="left:1220.42px;top:1060.65px;letter-spacing:0.29px">125</span><span class="uw" style="left:1263.54px;top:1060.65px;letter-spacing:0.19px">Col</span><span class="uw" style="left:1289.41px;top:1060.65px;letter-spacing:0.00px">:</span><span class="uw" style="left:1298.98px;top:1060.65px;letter-spacing:1.01px">49</span><span class="uw" style="left:1334.21px;top:1060.65px;letter-spacing:-0.20px">Pos</span><span class="uw" style="left:1362.91px;top:1060.65px;letter-spacing:0.00px">:</span><span class="uw" style="left:1372.86px;top:1060.65px;letter-spacing:0.67px">3,816</span><span class="uw" style="left:1547.83px;top:1060.65px;letter-spacing:0.16px">Unix</span><span class="uw" style="left:1581.14px;top:1060.65px;letter-spacing:0.24px">(LF)</span><span class="uw" style="left:1699.20px;top:1060.65px;letter-spacing:0.13px">ANSI</span><span class="uw" style="left:1863.61px;top:1060.65px;letter-spacing:1.07px">INS</span><span class="uw" style="left:29.34px;top:13.15px;letter-spacing:0.44px">Compare.rc</span><span class="uw" style="left:819.34px;top:13.15px;letter-spacing:0.44px">Compare.rc</span><span class="uw" style="left:900.90px;top:12.40px;font-size:20px;line-height:22px">*</span><span class="uw" style="left:909.70px;top:12.40px;font-size:20px;line-height:22px">*</span><span class="uw" style="left:921.34px;top:13.15px;letter-spacing:0.56px">Git</span><span class="uw" style="left:1573.59px;top:5.15px;letter-spacing:0.04px">ComparePlus</span><span class="uw" style="left:1663.41px;top:5.15px;letter-spacing:0.18px">NavBar</span>
</body></html>
